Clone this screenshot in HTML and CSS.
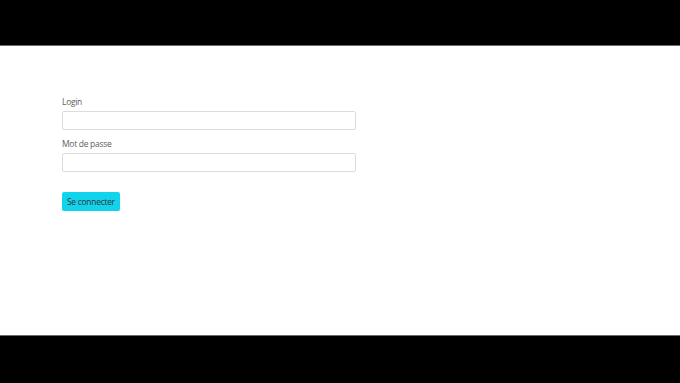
FILE: index.html
```html
<!DOCTYPE html>
<html lang="fr">
<head>
  <meta charset="UTF-8" />
  <title>Connexion</title>
  <link rel="stylesheet" href="styles.css">
</head>
<body>
  <div class="bar"></div>

  <main class="content">
    <form class="login-form" onsubmit="return false">
      <div class="field">
        <label for="login">Login</label>
        <input type="text" id="login" />
      </div>
      <div class="field">
        <label for="password">Mot de passe</label>
        <input type="password" id="password" />
      </div>
      <button type="submit" class="btn-info">Se connecter</button>
    </form>
  </main>

  <div class="bar bottom"></div>
</body>
</html>
```

FILE: styles.css
```css
* {
  box-sizing: border-box;
  font-family: 'Open Sans', 'Noto Sans', sans-serif;
}

html, body {
  margin: 0;
  padding: 0;
  height: 100%;
  background: #000;
}

.bar {
  height: 46px;
  background: #000;
  border-bottom: 1px solid #6a6a6a;
}

.bar.bottom {
  height: 48px;
  border-bottom: none;
  border-top: 1px solid #6a6a6a;
}

.content {
  background: #fff;
  height: 289px;
  padding: 50px 0 0 62px;
}

.login-form {
  width: 294px;
}

.field {
  margin-bottom: 8px;
}

.field label {
  display: block;
  font-size: 8.5px;
  line-height: 12px;
  letter-spacing: -0.3px;
  color: #606060;
  margin-bottom: 3px;
}

.field input {
  display: block;
  width: 100%;
  height: 19px;
  border: 1px solid #dcdcdc;
  border-radius: 2px;
  background: #fff;
  padding: 0 6px;
  font-size: 8.5px;
}

.btn-info {
  margin-top: 12px;
  height: 19px;
  padding: 0 5px;
  background: #12d3ec;
  color: #333;
  border: none;
  border-radius: 2px;
  font-size: 8.5px;
  letter-spacing: -0.3px;
  cursor: pointer;
}
```
